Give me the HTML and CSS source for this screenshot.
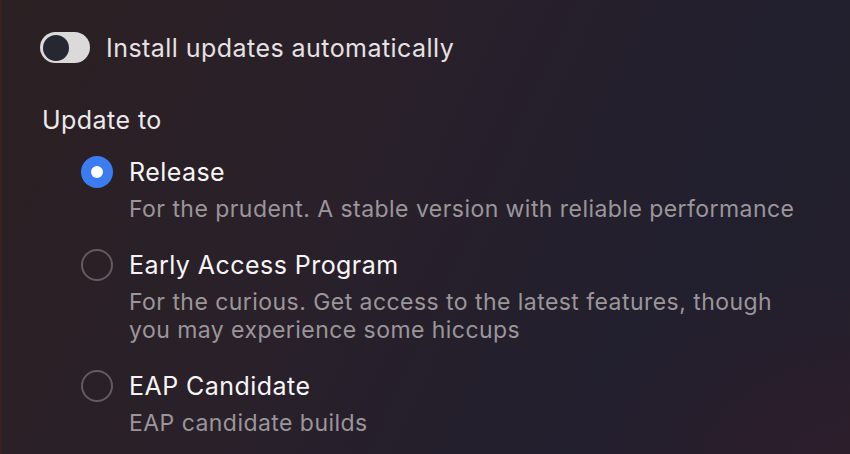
FILE: index.html
```html
<!DOCTYPE html>
<html>
<head>
<meta charset="utf-8">
<link rel="stylesheet" href="styles.css">
</head>
<body>
<div class="panel">
  <div class="toggle-row">
    <span class="toggle"><span class="knob"></span></span>
    <span class="toggle-label">Install updates automatically</span>
  </div>
  <div class="heading">Update to</div>
  <div class="options">
    <div class="option">
      <span class="radio checked"></span>
      <div class="option-text">
        <div class="title">Release</div>
        <div class="desc">For the prudent. A stable version with reliable performance</div>
      </div>
    </div>
    <div class="option">
      <span class="radio"></span>
      <div class="option-text">
        <div class="title">Early Access Program</div>
        <div class="desc">For the curious. Get access to the latest features, though<br>you may experience some hiccups</div>
      </div>
    </div>
    <div class="option">
      <span class="radio"></span>
      <div class="option-text">
        <div class="title">EAP Candidate</div>
        <div class="desc">EAP candidate builds</div>
      </div>
    </div>
  </div>
</div>
</body>
</html>
```

FILE: styles.css
```css
html, body {
  margin: 0;
  height: 100%;
}
body {
  font-family: Inter, "Noto Sans", sans-serif;
  color: #f2f0f1;
  background:
    radial-gradient(ellipse 300px 200px at 860px 470px, rgba(60, 28, 42, 0.45), rgba(60, 28, 42, 0) 100%),
    linear-gradient(115deg, #2b2022 0%, #29202a 40%, #221f2e 75%, #231f2c 100%);
  overflow: hidden;
  box-shadow: inset 2px 0 0 rgba(80, 30, 30, 0.5);
}
.panel {
  padding: 32px 0 0 40px;
}
.toggle-row {
  display: flex;
  align-items: center;
  gap: 16px;
  height: 31px;
}
.toggle {
  box-sizing: border-box;
  width: 50px;
  height: 31px;
  border-radius: 16px;
  background: #dcd9da;
  display: flex;
  align-items: center;
  padding-left: 3px;
}
.knob {
  width: 26px;
  height: 26px;
  border-radius: 50%;
  background: #252830;
}
.toggle-label {
  font-size: 25px;
  letter-spacing: 0.45px;
  line-height: 32px;
  color: #e6e2e3;
}
.heading {
  margin-top: 41px;
  margin-left: 2px;
  font-size: 25px;
  letter-spacing: 0.45px;
  line-height: 32px;
  color: #ece9ea;
}
.options {
  margin-top: 20px;
  padding-left: 41px;
  display: flex;
  flex-direction: column;
  gap: 26px;
}
.option {
  display: flex;
  gap: 16px;
  align-items: flex-start;
}
.radio {
  box-sizing: border-box;
  flex: none;
  width: 32px;
  height: 32px;
  border-radius: 50%;
  border: 2px solid #625c5e;
  display: flex;
  align-items: center;
  justify-content: center;
}
.radio.checked {
  border: none;
  background: #3b7cf0;
}
.radio.checked::after {
  content: "";
  width: 12px;
  height: 12px;
  border-radius: 50%;
  background: #ffffff;
}
.title {
  font-size: 25px;
  letter-spacing: 0.45px;
  line-height: 32px;
  color: #f7f5f6;
}
.desc {
  margin-top: 7px;
  font-size: 23px;
  letter-spacing: 0.45px;
  line-height: 28px;
  color: #9b9699;
}
```
